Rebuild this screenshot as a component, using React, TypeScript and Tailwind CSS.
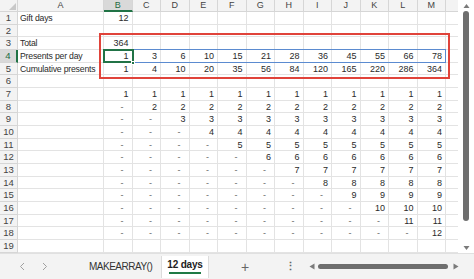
import React from "react";

const cols = ["B", "C", "D", "E", "F", "G", "H", "I", "J", "K", "L", "M"];
const perDay = [1, 3, 6, 10, 15, 21, 28, 36, 45, 55, 66, 78];
const cumulative = [1, 4, 10, 20, 35, 56, 84, 120, 165, 220, 286, 364];

type Cell = { v?: string | number; dash?: boolean };

function buildRows(): { a: string; cells: Cell[] }[] {
  const rows: { a: string; cells: Cell[] }[] = [];
  const empty = () => cols.map(() => ({} as Cell));
  const r1 = empty();
  r1[0] = { v: 12 };
  rows.push({ a: "Gift days", cells: r1 });
  rows.push({ a: "", cells: empty() });
  const r3 = empty();
  r3[0] = { v: 364 };
  rows.push({ a: "Total", cells: r3 });
  rows.push({ a: "Presents per day", cells: perDay.map((v) => ({ v })) });
  rows.push({ a: "Cumulative presents", cells: cumulative.map((v) => ({ v })) });
  rows.push({ a: "", cells: empty() });
  for (let i = 1; i <= 12; i++) {
    rows.push({
      a: "",
      cells: cols.map((_, j) => (i <= j + 1 ? { v: i } : { dash: true })),
    });
  }
  rows.push({ a: "", cells: empty() });
  return rows;
}

const rows = buildRows();

export default function App() {
  return (
    <div className="w-[474px] h-[279px] overflow-hidden bg-white font-['Liberation_Sans',Arial,sans-serif] text-[#2a2a2a] flex flex-col">
      <div className="flex h-[253px]">
        <div className="relative w-[458px]">
          <div className="grid grid-cols-[18px_86px_repeat(12,28.5px)_12px] grid-rows-[12px_repeat(19,12.68px)]">
            {/* header row */}
            <div className="bg-[#f3f3f3] border-r border-b border-[#d6d6d6] flex items-end justify-end p-[1px]">
              <svg width="7" height="7" viewBox="0 0 7 7">
                <polygon points="7,0 7,7 0,7" fill="#c8c8c8" />
              </svg>
            </div>
            <div className="bg-[#f3f3f3] border-r border-b border-[#d6d6d6] text-[9px] leading-[11px] text-center text-[#444]">A</div>
            {cols.map((c) =>
              c === "B" ? (
                <div key={c} className="bg-[#d9d9d9] border-r border-[#d6d6d6] border-b-2 border-b-[#217346] text-[9px] leading-[11px] text-center text-[#1e6b3f]">
                  {c}
                </div>
              ) : (
                <div key={c} className="bg-[#f3f3f3] border-r border-b border-[#d6d6d6] text-[9px] leading-[11px] text-center text-[#444]">
                  {c}
                </div>
              )
            )}
            <div className="bg-[#f3f3f3] border-b border-[#d6d6d6]" />
            {rows.map((row, ri) => (
              <React.Fragment key={ri}>
                {ri === 3 ? (
                  <div className="bg-[#d9d9d9] border-r-2 border-r-[#217346] border-b border-[#d6d6d6] text-[9.5px] leading-[12px] text-center text-[#1e6b3f]">
                    {ri + 1}
                  </div>
                ) : (
                  <div className="bg-[#f3f3f3] border-r border-b border-[#d6d6d6] text-[9.5px] leading-[12px] text-center text-[#444]">
                    {ri + 1}
                  </div>
                )}
                <div className="border-r border-b border-[#e3e3e3] text-[8.7px] leading-[12px] pl-[2px] whitespace-nowrap tracking-[-0.2px]">
                  {row.a}
                </div>
                {row.cells.map((c, ci) => (
                  <div
                    key={ci}
                    className={
                      c.dash
                        ? "border-r border-b border-[#e3e3e3] text-[9px] leading-[12px] text-right pr-[8px] text-[#666]"
                        : "border-r border-b border-[#e3e3e3] text-[9px] leading-[12px] text-right pr-[3px]"
                    }
                  >
                    {c.dash ? "-" : c.v}
                  </div>
                ))}
                <div className="border-b border-[#e3e3e3]" />
              </React.Fragment>
            ))}
          </div>
          {/* red outline */}
          <div className="absolute left-[99px] top-[33px] w-[351px] h-[46px] border-2 border-[#e0433a] pointer-events-none" />
          {/* blue outline row 4 */}
          <div className="absolute left-[104px] top-[49px] w-[342px] h-[14px] border border-[#5b8bd0] pointer-events-none" />
          {/* active cell */}
          <div className="absolute left-[103px] top-[49px] w-[31px] h-[14px] border-2 border-[#217346] pointer-events-none" />
          <div className="absolute left-[131px] top-[61px] w-[4px] h-[4px] bg-[#217346] border border-white" />
        </div>
        {/* vertical scrollbar */}
        <div className="w-[16px] flex flex-col items-center bg-white">
          <svg width="7" height="6" viewBox="0 0 7 6" className="mt-[3px]">
            <polygon points="3.5,1 6.5,5 0.5,5" fill="#7a7a7a" />
          </svg>
          <div className="mt-[2px] w-[6px] h-[210px] rounded-full bg-[#6e6e6e]" />
          <div className="flex-1" />
          <svg width="7" height="6" viewBox="0 0 7 6" className="mb-[2px]">
            <polygon points="0.5,1 6.5,1 3.5,5" fill="#7a7a7a" />
          </svg>
        </div>
      </div>
      {/* tab bar */}
      <div className="h-[26px] bg-[#f3f3f3] border-t border-[#e0e0e0] flex items-center text-[#333]">
        <svg width="6" height="9" viewBox="0 0 6 9" className="ml-[19px]">
          <polyline points="5,1 1.5,4.5 5,8" fill="none" stroke="#a0a0a0" strokeWidth="1" />
        </svg>
        <svg width="6" height="9" viewBox="0 0 6 9" className="ml-[17px]">
          <polyline points="1,1 4.5,4.5 1,8" fill="none" stroke="#a0a0a0" strokeWidth="1" />
        </svg>
        <div className="ml-[41px] text-[10px] tracking-[-0.5px] text-[#333] w-[72px] whitespace-nowrap">MAKEARRAY()</div>
        <div className="h-[22px] w-[48px] bg-white border-l border-r border-[#dcdcdc] flex flex-col items-center justify-center">
          <div className="text-[10px] font-bold text-[#222] leading-[12px] tracking-[-0.2px]">12 days</div>
          <div className="mt-[1px] w-[32px] h-[2px] bg-[#1f7a45]" />
        </div>
        <div className="ml-[32px] text-[14px] text-[#666] leading-none font-light">+</div>
        <div className="ml-[36px] text-[11px] text-[#666] leading-none font-bold">⋮</div>
        <svg width="6" height="7" viewBox="0 0 6 7" className="ml-[13px]">
          <polygon points="0.5,3.5 5.5,0.5 5.5,6.5" fill="#7a7a7a" />
        </svg>
        <div className="ml-[3px] w-[130px] h-[5px] rounded-full bg-[#6e6e6e]" />
        <div className="flex-1" />
        <svg width="6" height="7" viewBox="0 0 6 7" className="mr-[15px]">
          <polygon points="0.5,0.5 5.5,3.5 0.5,6.5" fill="#7a7a7a" />
        </svg>
      </div>
    </div>
  );
}
